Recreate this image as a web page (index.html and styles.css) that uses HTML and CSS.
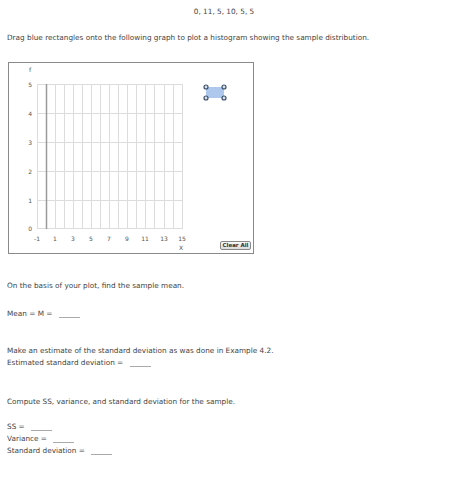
FILE: index.html
```html
<!DOCTYPE html>
<html lang="en">
  <head>
    <meta charset="UTF-8" />
    <title>Sample Distribution</title>
    <link rel="stylesheet" href="styles.css">
  </head>
  <body>
    <p class="data">0, 11, 5, 10, 5, 5</p>
    <p class="intro">Drag blue rectangles onto the following graph to plot a histogram showing the sample distribution.</p>

    <div class="graph">
      <svg class="plot" width="244" height="190" viewBox="0 0 244 190">
        <g class="grid">
          <line x1="28" y1="21.5" x2="173" y2="21.5" />
          <line x1="28" y1="50.5" x2="173" y2="50.5" />
          <line x1="28" y1="79.5" x2="173" y2="79.5" />
          <line x1="28" y1="108.5" x2="173" y2="108.5" />
          <line x1="28" y1="137.5" x2="173" y2="137.5" />
          <line x1="28" y1="165.5" x2="173" y2="165.5" />
          <line x1="28.5" y1="21" x2="28.5" y2="166" />
          <line x1="46.5" y1="21" x2="46.5" y2="166" />
          <line x1="55.5" y1="21" x2="55.5" y2="166" />
          <line x1="64.5" y1="21" x2="64.5" y2="166" />
          <line x1="73.5" y1="21" x2="73.5" y2="166" />
          <line x1="82.5" y1="21" x2="82.5" y2="166" />
          <line x1="91.5" y1="21" x2="91.5" y2="166" />
          <line x1="100.5" y1="21" x2="100.5" y2="166" />
          <line x1="109.5" y1="21" x2="109.5" y2="166" />
          <line x1="118.5" y1="21" x2="118.5" y2="166" />
          <line x1="127.5" y1="21" x2="127.5" y2="166" />
          <line x1="136.5" y1="21" x2="136.5" y2="166" />
          <line x1="145.5" y1="21" x2="145.5" y2="166" />
          <line x1="155.5" y1="21" x2="155.5" y2="166" />
          <line x1="164.5" y1="21" x2="164.5" y2="166" />
          <line x1="173.5" y1="21" x2="173.5" y2="166" />
        </g>
        <line class="axis" x1="37.5" y1="21" x2="37.5" y2="166" />

        <g class="ticks">
          <text x="20" y="9">f</text>
          <text x="23" y="24" text-anchor="end">5</text>
          <text x="23" y="53" text-anchor="end">4</text>
          <text x="23" y="82" text-anchor="end">3</text>
          <text x="23" y="111" text-anchor="end">2</text>
          <text x="23" y="140" text-anchor="end">1</text>
          <text x="23" y="168" text-anchor="end">0</text>
          <text x="28" y="178" text-anchor="middle">-1</text>
          <text x="46" y="178" text-anchor="middle">1</text>
          <text x="64" y="178" text-anchor="middle">3</text>
          <text x="82" y="178" text-anchor="middle">5</text>
          <text x="100" y="178" text-anchor="middle">7</text>
          <text x="118" y="178" text-anchor="middle">9</text>
          <text x="136" y="178" text-anchor="middle">11</text>
          <text x="155" y="178" text-anchor="middle">13</text>
          <text x="173" y="178" text-anchor="middle">15</text>
          <text x="172" y="187" text-anchor="middle">X</text>
        </g>

        <!-- draggable bar -->
        <g class="bar">
          <rect x="197" y="24" width="18" height="11" />
          <circle cx="197" cy="24" r="2" />
          <circle cx="215" cy="24" r="2" />
          <circle cx="197" cy="35" r="2" />
          <circle cx="215" cy="35" r="2" />
        </g>
      </svg>
      <button class="clear">Clear All</button>
    </div>

    <p class="question">On the basis of your plot, find the sample mean.</p>
    <p class="answer">Mean = M = <span class="blank"></span></p>

    <p class="question q2">Make an estimate of the standard deviation as was done in Example 4.2.</p>
    <p class="answer tight">Estimated standard deviation = <span class="blank"></span></p>

    <p class="question q3">Compute SS, variance, and standard deviation for the sample.</p>
    <p class="answer ss">SS = <span class="blank"></span></p>
    <p class="answer tight">Variance = <span class="blank"></span></p>
    <p class="answer tight">Standard deviation = <span class="blank"></span></p>
  </body>
</html>
```

FILE: styles.css
```css
* {
  margin: 0;
  padding: 0;
  box-sizing: border-box;
}

body {
  font-family: "DejaVu Sans", Verdana, sans-serif;
  font-size: 7.3px;
  line-height: 12px;
  color: #444;
  background: #fff;
  width: 448px;
  padding: 6px 7px;
}

.data {
  text-align: center;
}

.intro {
  margin-top: 14px;
}

/* Graph */
.graph {
  position: relative;
  width: 246px;
  height: 192px;
  margin-top: 18px;
  margin-left: 1px;
  border: 1px solid #8a8a8a;
}

.plot {
  display: block;
}

.grid line {
  stroke: #dcdcdc;
  stroke-width: 1;
}

.axis {
  stroke: #9a9a9a;
  stroke-width: 1.5;
}

.ticks text {
  font-family: "DejaVu Sans", Verdana, sans-serif;
  font-size: 6px;
  fill: #555;
}

.bar rect {
  fill: #adc8ec;
}

.bar circle {
  fill: #d8e2ee;
  stroke: #3e5068;
  stroke-width: 1.2;
}

.clear {
  position: absolute;
  right: 2px;
  bottom: 3px;
  width: 31px;
  height: 9px;
  font-family: "DejaVu Sans", Verdana, sans-serif;
  font-size: 5.5px;
  font-weight: bold;
  line-height: 7px;
  color: #333;
  background: linear-gradient(#fafafa, #dadada);
  border: 1px solid #8a8a8a;
  border-radius: 2px;
}

/* Questions */
.question {
  margin-top: 26px;
}

.q2 {
  margin-top: 25px;
}

.q3 {
  margin-top: 27px;
}

.answer {
  margin-top: 16px;
}

.answer.ss {
  margin-top: 13px;
}

.answer.tight {
  margin-top: 0;
}

.blank {
  display: inline-block;
  width: 21px;
  margin-left: 4px;
  border-bottom: 1px solid #aaa;
  vertical-align: -2px;
}
```
